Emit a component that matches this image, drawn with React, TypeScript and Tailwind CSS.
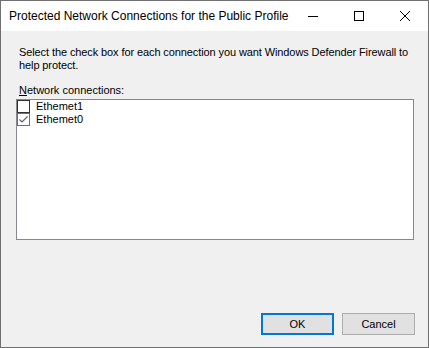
import React from "react";

function Check({ checked }: { checked: boolean }) {
  return (
    <div
      className={
        "w-[13px] h-[13px] border bg-white shrink-0 flex items-center justify-center " +
        (checked ? "border-[#6d6d6d]" : "border-[#333333]")
      }
    >
      {checked && (
        <svg width="11" height="11" viewBox="0 0 11 11">
          <path d="M1.5 5.5 L4 8 L9.5 2.5" fill="none" stroke="#5e5e5e" strokeWidth="1.1" />
        </svg>
      )}
    </div>
  );
}

export default function App() {
  const body = { fontFamily: '"Liberation Sans", Arial, sans-serif' };
  return (
    <div className="w-[429px] h-[348px] border border-[#707070] bg-[#f0f0f0] flex flex-col overflow-hidden">
      <div className="h-[30px] bg-white flex items-stretch shrink-0">
        <div
          className="flex-1 flex items-center pl-[8px] text-[12px] text-black"
          style={{ fontFamily: '"Liberation Sans", Arial, sans-serif' }}
        >
          Protected Network Connections for the Public Profile
        </div>
        <div className="w-[46px] flex items-center justify-center">
          <svg width="10" height="10" viewBox="0 0 10 10">
            <path d="M0 5.5 H10" stroke="#000" strokeWidth="1" />
          </svg>
        </div>
        <div className="w-[46px] flex items-center justify-center">
          <svg width="10" height="10" viewBox="0 0 10 10">
            <rect x="0.5" y="0.5" width="9" height="9" fill="none" stroke="#000" strokeWidth="1" />
          </svg>
        </div>
        <div className="w-[46px] flex items-center justify-center">
          <svg width="10" height="10" viewBox="0 0 10 10">
            <path d="M0 0 L10 10 M10 0 L0 10" stroke="#000" strokeWidth="1" />
          </svg>
        </div>
      </div>
      <div className="flex-1 flex flex-col px-[15px] pt-[15px]" style={body}>
        <div className="pl-[3px] text-[11px] leading-[13px] text-black whitespace-nowrap tracking-[-0.1px]">
          Select the check box for each connection you want Windows Defender Firewall to
          <br />
          help protect.
        </div>
        <div className="pl-[3px] mt-[12px] text-[11px] leading-[13px] text-black">
          <span className="underline">N</span>etwork connections:
        </div>
        <div className="mt-[2px] w-[398px] h-[141px] border border-[#828790] bg-white">
          <div className="flex items-center h-[13px] gap-[6px] text-[11px] text-black">
            <Check checked={false} />
            <span>Ethemet1</span>
          </div>
          <div className="flex items-center h-[13px] gap-[6px] text-[11px] text-black">
            <Check checked={true} />
            <span>Ethemet0</span>
          </div>
        </div>
        <div className="mt-auto flex justify-end gap-[8px] pb-[12px] -mr-[2px]">
          <button className="w-[73px] h-[22px] bg-[#e1e1e1] border-2 border-[#0078d7] text-[11px] text-black">
            OK
          </button>
          <button className="w-[73px] h-[22px] bg-[#e1e1e1] border border-[#adadad] text-[11px] text-black">
            Cancel
          </button>
        </div>
      </div>
    </div>
  );
}
